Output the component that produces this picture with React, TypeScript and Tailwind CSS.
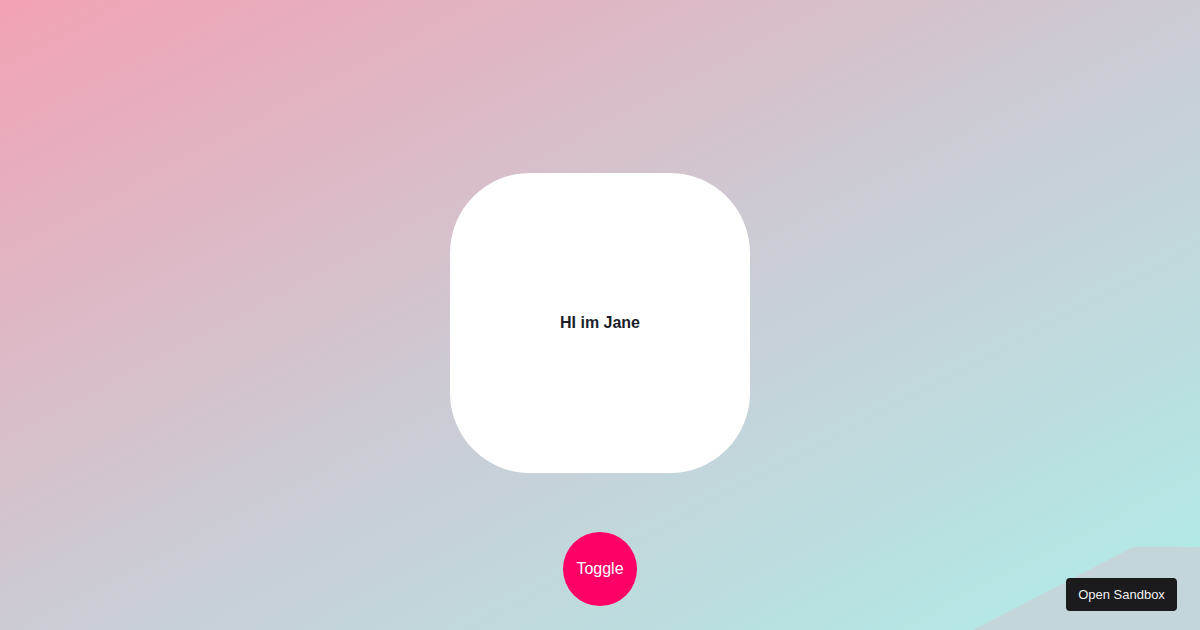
import React from "react";

export default function App() {
  return (
    <div
      className="relative w-[1200px] h-[630px] overflow-hidden bg-[linear-gradient(to_bottom_right,#f2a2b4,#cccbd4_50%,#aeede9)] flex flex-col items-center"
      style={{ fontFamily: '"Liberation Sans", Arial, sans-serif' }}
    >
      <svg className="absolute left-0 top-0" width="1200" height="630" viewBox="0 0 1200 630">
        <polygon points="973,630 1133,547 1200,547 1200,630" fill="#c5d6da" />
      </svg>
      <div className="relative mt-[173px] w-[300px] h-[300px] rounded-[80px] bg-white flex items-center justify-center">
        <span className="text-[16px] font-bold text-[#1a1f2b]">HI im Jane</span>
      </div>
      <button className="relative mt-[59px] w-[74px] h-[74px] rounded-full bg-[#ff0066] text-white text-[16px] flex items-center justify-center">
        Toggle
      </button>
      <div className="absolute left-[1066px] top-[578px] w-[111px] h-[33px] rounded-[4px] bg-[#1b1b1e] text-[#f0f0f0] text-[13px] flex items-center justify-center">
        Open Sandbox
      </div>
    </div>
  );
}
